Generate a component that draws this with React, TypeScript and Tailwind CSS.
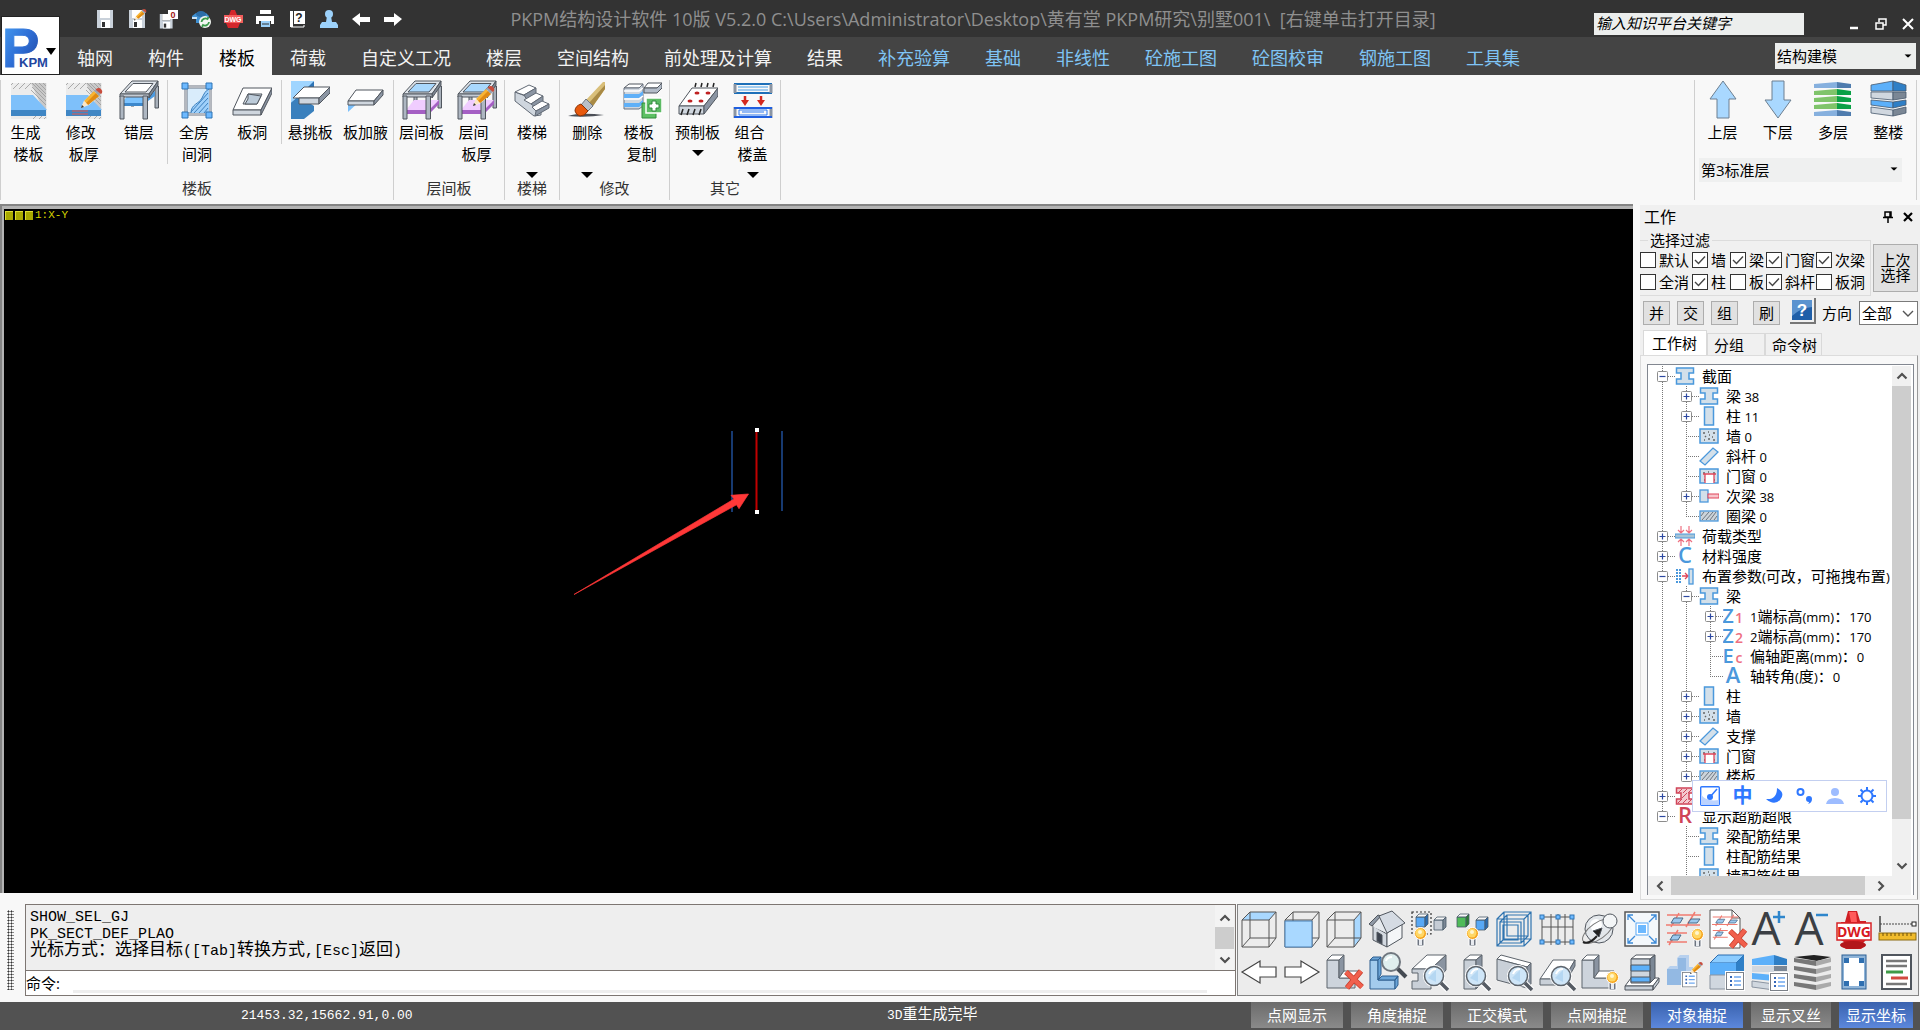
import { useState } from 'react';
import type { ReactNode } from 'react';

/* ---------- small shared pieces ---------- */

function Svg({ box, className, children }: { box: number; className: string; children: ReactNode }) {
  return (
    <svg viewBox={`0 0 ${box} ${box}`} className={`shrink-0 ${className}`} aria-hidden="true">
      {children}
    </svg>
  );
}

// Latin runs are set a little smaller than the Chinese text around them
function Mixed({ text, latin }: { text: string; latin: string }) {
  return (
    <>
      {text.split(/([\x20-\x7e]+)/).map((part, i) =>
        i % 2 ? (
          <span key={i} className={latin}>
            {part}
          </span>
        ) : (
          part
        ),
      )}
    </>
  );
}

function Caret({ className = '' }: { className?: string }) {
  return (
    <svg viewBox="0 0 12 6" className={`w-3 h-1.5 ${className}`} aria-hidden="true">
      <path d="M0 0h12L6 6z" fill="#000" />
    </svg>
  );
}

function Chevron({ d }: { d: string }) {
  return (
    <svg viewBox="0 0 12 12" className="w-3 h-3" aria-hidden="true">
      <path d={d} fill="none" stroke="#505050" strokeWidth="2.2" />
    </svg>
  );
}

const UP = 'M1.500 8.500L6 4l4.500 4.500';
const DOWN = 'M1.500 3.500L6 8l4.500-4.500';
const LEFT = 'M8.500 1.500L4 6l4.500 4.500';
const RIGHT = 'M3.500 1.500L8 6l-4.500 4.500';

/* ---------- drawing parts used by several icons ---------- */

const Pencil = () => (
  <g>
    <path d="M0 20l3-7L16 1l5 4L8 17z" fill="#fff" opacity=".7" />
    <path d="M3 13l10-10 5 5L7 17z" fill="#f8b432" />
    <path d="M5 15l10-10 3 3L7 17z" fill="#e08a12" />
    <path d="M13 3l2-2 5 4-2 3z" fill="#9aa3b0" />
    <path d="M15 1q3-2 5 0t1 4l-1 1-5-4z" fill="#c84c3c" />
    <path d="M0 20l3-7 4 4z" fill="#fbe6c4" />
    <path d="M0 20l1-3 2 2z" fill="#333" />
  </g>
);

const Bulb = () => (
  <g>
    <rect x="3" y="11" width="7" height="8" rx="1" fill="#6d7480" stroke="#fff" />
    <rect x="5" y="11" width="3" height="7" fill="#e8ebf0" />
    <circle cx="6.500" cy="6.500" r="6" fill="#f6a51f" stroke="#fff" />
    <circle cx="6" cy="6" r="4.500" fill="#ffd765" />
    <circle cx="6" cy="5" r="2" fill="#fff6cf" />
  </g>
);

const Lens = () => (
  <g>
    <path d="M17 17l8 8" stroke="#fff" strokeWidth="6" />
    <circle cx="11" cy="11" r="11" fill="#fff" />
    <path d="M18 18l7 7" stroke="#555b63" strokeWidth="3.500" />
    <circle cx="11" cy="11" r="9.500" fill="#cfe6f8" stroke="#5d646c" strokeWidth="1.500" />
    <path d="M5 13L13 5v12z" fill="#a9d0f0" opacity=".7" />
    <path d="M6 9q2-5 7-5" fill="none" stroke="#fff" strokeWidth="2" />
  </g>
);

const Cross = () => (
  <g>
    <path d="M2 3l16 15M17 2L3 19" stroke="#c63d2b" strokeWidth="5.500" />
    <path d="M2 3l16 15M17 2L3 19" stroke="#f0604d" strokeWidth="4" />
  </g>
);

const Sheet = () => (
  <g>
    <rect x="-1" y="-1" width="20" height="20" fill="#fff" />
    <rect x=".5" y=".5" width="17" height="17" fill="#fff" stroke="#7b8088" />
    <path d="M4 5h2M4 9h2M4 13h2" stroke="#3567b8" strokeWidth="2" />
    <path d="M8 5h7M8 9h7M8 13h7" stroke="#6fa8ef" strokeWidth="1.500" />
  </g>
);

const Table = ({ floor }: { floor: string }) => (
  <g strokeLinejoin="round">
    <rect x="36" y="6" width="3.500" height="22" fill="#a9b1bb" stroke="#50565e" />
    <rect x="12" y="6" width="3" height="20" fill="#a9b1bb" stroke="#50565e" />
    {floor === 'blue' ? (
      <g>
        <path d="M5 20l4-5h16v8H5z" fill="#7cc3ff" />
        <path d="M5 23h21v3H5z" fill="#3d88cc" />
        <path d="M29 16l7-5v5l-7 5z" fill="#4d9be0" />
      </g>
    ) : (
      <g>
        <path d="M4 30l8-10h25l-9 10z" fill="#f0cdff" />
        <path d="M4 30h23l10-10v4L27 34H4z" fill="#a560c4" />
      </g>
    )}
    <path d="M1 14L13 1h26l-9 13z" fill="#dfe4ea" stroke="#50565e" />
    <path d="M6 12l8-8.500h20L27 12z" fill={floor === 'blue' ? '#fff' : '#a9d8fd'} stroke="#50565e" />
    <path d="M30 14L39 1v4l-9 13z" fill="#7d8692" stroke="#50565e" />
    <path d="M1 14h29v3H1z" fill="#c5ccd5" stroke="#50565e" />
    <rect x="1" y="16" width="4" height="23" fill="#aeb7c2" stroke="#50565e" />
    <rect x="24" y="16" width="4.500" height="23" fill="#aeb7c2" stroke="#50565e" />
  </g>
);

const SlabWall = () => (
  <g>
    <path d="M2 3h36v36H2z" fill="#ececec" />
    <path d="M22 3h15v33z" fill="#c9c9c9" />
    <path d="M2 5l2-2M4 9l6-6M10 9l6-6M16 9l6-6M23 3l14 14M26 3l11 11M30 3l7 7M23 7l14 14M22 10l15 15M34 3l3 3M24 39l3-3M30 39l3-3M35 39l2-2" stroke="#999" strokeWidth=".8" />
    <path d="M2 15h22l14 15H2z" fill="#7ec0fa" />
    <path d="M2 30h35v6H2z" fill="#3f86c4" />
  </g>
);

const DwgMark = () => (
  <g>
    <path d="M12 0h9l3 10h6v19l-3 3 2 3-4 3H10l-5-3 3-4-3-2V11h4z" fill="#cf1f24" />
    <path d="M13 1h7l1 10h-6z" fill="#ff5b5b" />
    <ellipse cx="17" cy="34" rx="13" ry="4" fill="#b3161b" />
    <rect x="1" y="12" width="34" height="17" fill="#fff" stroke="#d62226" strokeWidth="1.500" />
    <text x="18" y="26" textAnchor="middle" fontSize="14" fontWeight="bold" fill="#d8191f" fontFamily="Open Sans">
      DWG
    </text>
  </g>
);

/* ---------- title bar ---------- */

const Disk = () => (
  <g>
    <path d="M1 0h3v8h10V0h3v18H1z" fill="#c9d1da" />
    <rect x="4" y="0" width="10" height="8" fill="#fff" />
    <rect x="5" y="10" width="9" height="8" fill="#fff" />
    <rect x="6" y="12" width="3" height="5" fill="#333" />
  </g>
);

const quickIcons: { name: string; art: ReactNode }[] = [
  { name: '保存', art: <Disk /> },
  {
    name: '另存',
    art: (
      <g>
        <Disk />
        <g transform="translate(6 -1) scale(.58)"><Pencil /></g>
      </g>
    ),
  },
  {
    name: '恢复',
    art: (
      <g>
        <g transform="translate(-1 4) scale(.8)"><Disk /></g>
        <rect x="8" y="0" width="10" height="9" fill="#fff" />
        <text x="13" y="8" textAnchor="middle" fontSize="9" fontWeight="bold" fill="#a01818" fontFamily="Liberation Sans">0</text>
      </g>
    ),
  },
  {
    name: '更新',
    art: (
      <g>
        <path d="M0 6l4-3h10l3 3v7H4V9H0z" fill="#3f8fd0" />
        <ellipse cx="9" cy="4" rx="5" ry="3" fill="#2c6ea8" />
        <path d="M0 7h5v2H0z" fill="#c9e4f9" />
        <circle cx="13" cy="12" r="6" fill="#f2f7f2" />
        <path d="M9.500 12a4 4 0 016-3l1-2M17 12a4 4 0 01-6 3l-1 2" fill="none" stroke="#3a9a4a" strokeWidth="1.800" />
      </g>
    ),
  },
  {
    name: 'DWG',
    art: (
      <g>
        <path d="M7 0h4l2 5h3v8l-2 5H4l-2-5V5h3z" fill="#d3262b" />
        <rect x="0" y="5" width="19" height="8" fill="#f25c5c" />
        <text x="9" y="12" textAnchor="middle" fontSize="7" fontWeight="bold" fill="#fff" fontFamily="Liberation Sans">DWG</text>
      </g>
    ),
  },
  {
    name: '打印',
    art: (
      <g>
        <path d="M4 0h11v4H4z" fill="#fff" />
        <path d="M0 6h18v8h-3v-3H3v3H0z" fill="#fff" />
        <path d="M5 11h9v6H5z" fill="#9dd2fb" />
        <path d="M6 14h7" stroke="#333" />
      </g>
    ),
  },
  {
    name: '帮助',
    art: (
      <g>
        <path d="M2 1h3v16H2zM6 1h11v13H6z" fill="#fff" />
        <path d="M3 17h13v-2" stroke="#fff" fill="none" />
        <text x="11" y="12" textAnchor="middle" fontSize="12" fontWeight="bold" fill="#222" fontFamily="Liberation Sans">?</text>
      </g>
    ),
  },
  {
    name: '用户',
    art: (
      <g fill="#9dd2fb">
        <circle cx="9" cy="4" r="4" />
        <path d="M7 6h4l1 6h4l2 3v3H0v-3l2-3h4z" />
      </g>
    ),
  },
  { name: '撤销', art: <path d="M0 9l8-6v4h10v5H8v4z" fill="#fff" /> },
  { name: '重做', art: <path d="M18 9l-8-6v4H0v5h10v4z" fill="#fff" /> },
];

function TitleBar() {
  return (
    <div className="h-[37px] bg-[#333] flex items-center pl-[90px]">
      <div className="flex gap-0.5">
        {quickIcons.map((q) => (
          <button key={q.name} aria-label={q.name} className="w-[30px] h-7 flex items-center justify-center">
            <Svg box={18} className="w-[18px] h-[18px] overflow-visible">{q.art}</Svg>
          </button>
        ))}
      </div>
      <h1 className="flex-1 pr-14 text-center text-[18px] leading-6 text-[#8f8f8f] whitespace-pre">
        {'PKPM结构设计软件 10版 V5.2.0 C:\\Users\\Administrator\\Desktop\\黄有堂 PKPM研究\\别墅001\\  [右键单击打开目录]'}
      </h1>
      <input
        type="text"
        aria-label="搜索"
        placeholder="输入知识平台关键字"
        className="w-[210px] h-[22px] mt-2.5 px-0.5 bg-[#eceeed] text-[15px] italic placeholder:text-black outline-none"
      />
      <div className="flex items-center ml-[38px] mt-2.5">
        <button aria-label="最小化" className="w-6 h-6 flex items-center justify-center">
          <Svg box={12} className="w-3 h-3"><path d="M2 10h8" stroke="#fff" strokeWidth="2.500" /></Svg>
        </button>
        <button aria-label="还原" className="w-[30px] h-6 flex items-center justify-center">
          <Svg box={12} className="w-3 h-3">
            <path d="M4 4V1h7v6H8" fill="none" stroke="#fff" strokeWidth="1.500" />
            <rect x="1" y="5" width="7" height="6" fill="none" stroke="#fff" strokeWidth="1.500" />
          </Svg>
        </button>
        <button aria-label="关闭" className="w-6 h-6 flex items-center justify-center">
          <Svg box={12} className="w-3 h-3"><path d="M1 1l10 10M11 1L1 11" stroke="#fff" strokeWidth="2" /></Svg>
        </button>
      </div>
    </div>
  );
}

function AppLogo() {
  return (
    <button aria-label="应用菜单" className="absolute left-px top-4 w-[59px] h-[59px] bg-white border border-[#222]">
      <svg viewBox="0 0 57 57" className="w-full h-full" aria-hidden="true">
        <defs>
          <linearGradient id="logo" x1="0" y1="0" x2="1" y2="1">
            <stop offset="0" stopColor="#4aa3f5" />
            <stop offset=".5" stopColor="#2f6fd6" />
            <stop offset="1" stopColor="#1c3b94" />
          </linearGradient>
        </defs>
        <text x="0" y="50" fontSize="56" fontWeight="bold" fill="url(#logo)" stroke="url(#logo)" fontFamily="Liberation Sans">P</text>
        <text x="17" y="50" fontSize="13" fontWeight="900" fill="#23469f" stroke="#fff" strokeWidth="2" paintOrder="stroke" fontFamily="Liberation Sans">KPM</text>
        <path d="M44 31h10l-5 7z" fill="#000" />
      </svg>
    </button>
  );
}

/* ---------- menu tabs ---------- */

const mainTabs = ['轴网', '构件', '楼板', '荷载', '自定义工况', '楼层', '空间结构', '前处理及计算', '结果'];
const extraTabs = ['补充验算', '基础', '非线性', '砼施工图', '砼图校审', '钢施工图', '工具集'];

function MenuTabs() {
  const [active, setActive] = useState('楼板');
  return (
    <nav className="h-[38px] bg-[#444] flex items-end pl-[60px]">
      <div className="flex gap-px h-[38px]">
        {[...mainTabs, ...extraTabs].map((tab) => (
          <button
            key={tab}
            onClick={() => setActive(tab)}
            className={`px-[17px] pt-[5px] text-[18px] leading-[33px] whitespace-nowrap ${
              active === tab ? 'bg-[#f8f8f8] text-black' : extraTabs.includes(tab) ? 'text-[#7fc4f5]' : 'text-[#f2f2f2]'
            }`}
          >
            {tab}
          </button>
        ))}
      </div>
      <div className="relative ml-auto mr-1 mb-1.5">
        <select aria-label="模块" className="appearance-none w-[141px] h-[26px] px-0.5 bg-[#eceeed] text-[15px]">
          <option>结构建模</option>
        </select>
        <Caret className="absolute right-0.5 top-2.5 scale-60 pointer-events-none" />
      </div>
    </nav>
  );
}

/* ---------- ribbon ---------- */

type Tool = { lines: string[]; art: ReactNode; menu?: boolean };

const penOnTop = <g transform="translate(16 6)"><Pencil /></g>;

const slabA: Tool[] = [
  { lines: ['生成', '楼板'], art: <SlabWall /> },
  {
    lines: ['修改', '板厚'],
    art: (
      <g>
        <SlabWall />
        <path d="M8 31h16M8 34h16" stroke="#e8564a" strokeWidth="1.200" />
        <g transform="translate(17 8)"><Pencil /></g>
      </g>
    ),
  },
  { lines: ['错层'], art: <Table floor="blue" /> },
];

const slabB: Tool[] = [
  {
    lines: ['全房', '间洞'],
    art: (
      <g>
        <rect x="8" y="6" width="26" height="29" fill="#fff" stroke="#6a7380" />
        <rect x="10" y="8" width="22" height="25" fill="#d9ecfb" stroke="#6a7380" />
        <path d="M14 33c0-9 8-9 11-15 2-4 3-7 7-9v24z" fill="#9fd0fa" />
        <path d="M14 32L31 13M17 33l14-15M22 33l9-10M27 33l4-5" stroke="#3c80be" />
        <path d="M14 33c0-9 8-9 11-15 2-4 3-7 7-9" fill="none" stroke="#3c80be" />
        {['M5 3h6v6H5z', 'M29 3h6v6h-6z', 'M5 32h6v6H5z', 'M29 32h6v6h-6z'].map((d) => (
          <path key={d} d={d} fill="#6db9ff" stroke="#2f74b5" />
        ))}
      </g>
    ),
  },
  {
    lines: ['板洞'],
    art: (
      <g stroke="#50565e" strokeLinejoin="round">
        <path d="M11 8h29L29 30H1z" fill="#fff" />
        <path d="M1 30h28v5H1z" fill="#cfd6de" />
        <path d="M40 8v5L29 35v-5z" fill="#8b95a3" />
        <path d="M16 14h14l-5 10H11z" fill="#dfe8f0" />
        <path d="M16 14v5l-3 5h12l4-8z" fill="#bccbd9" />
      </g>
    ),
  },
];

const slabC: Tool[] = [
  {
    lines: ['悬挑板'],
    art: (
      <g>
        <path d="M1 16L24 1v14L1 39z" fill="#2f74b5" />
        <path d="M1 1h23L8 17l-7 6z" fill="#9fd5ff" />
        <path d="M1 23l8-7 15 10v5L14 39H1z" fill="#3a80bd" />
        <path d="M14 7h26L29 18H3z" fill="#fff" stroke="#50565e" />
        <path d="M9 18h20v6H9z" fill="#cfd6de" stroke="#50565e" />
        <path d="M40 7v6L29 24v-6z" fill="#8b95a3" stroke="#50565e" />
      </g>
    ),
  },
  {
    lines: ['板加腋'],
    art: (
      <g>
        <path d="M3 21h12L3 32z" fill="#7cc0fb" />
        <path d="M11 10h27l-9 11H3z" fill="#fff" stroke="#50565e" />
        <path d="M3 21h26v4H3z" fill="#cfd6de" stroke="#50565e" />
        <path d="M38 10v5l-9 10v-4z" fill="#8b95a3" stroke="#50565e" />
      </g>
    ),
  },
];

const midSlab: Tool[] = [
  { lines: ['层间板'], art: <Table floor="purple" /> },
  { lines: ['层间', '板厚'], art: <g><Table floor="purple" />{penOnTop}</g> },
];

const stairs: Tool[] = [
  {
    lines: ['楼梯'],
    menu: true,
    art: (
      <g stroke="#626a75" strokeLinejoin="round">
        <path d="M3 12v9l19 15 7-1V22z" fill="#cfd6de" />
        <path d="M3 12l14-7 7 3-12 7z" fill="#fff" />
        <path d="M12 15l12-7v5l-9 7z" fill="#8b95a3" />
        <path d="M12 20l12-7 7 3-12 8z" fill="#fff" />
        <path d="M19 24l12-8v5l-8 6z" fill="#8b95a3" />
        <path d="M20 27l10-6 7 3-13 7z" fill="#fff" />
        <path d="M24 31l13-7v4L23 36z" fill="#8b95a3" />
      </g>
    ),
  },
];

const editTools: Tool[] = [
  {
    lines: ['删除'],
    menu: true,
    art: (
      <g>
        <path d="M1 36q12-4 36-1-18 3-36 1z" fill="#4b4f56" />
        <path d="M19 20L36 2h2v7L26 26z" fill="#d9bf7a" />
        <path d="M22 23L38 5v4L26 26z" fill="#a98a45" />
        <path d="M14 25l5-6 7 7-5 5z" fill="#b9bfc7" stroke="#70767f" />
        <path d="M8 31q0-5 6-7l7 7q-3 5-8 5-4-1-5-5z" fill="#e8590c" stroke="#8b3204" />
      </g>
    ),
  },
  {
    lines: ['楼板', '复制'],
    art: (
      <g>
        <path d="M7 4h14l-4 4H2z" fill="#fff" stroke="#50565e" />
        <path d="M2 8h15l4-4v22l-4 3H2z" fill="#cfd6de" stroke="#6a7380" />
        <path d="M2 14h15l4-3v4l-4 3H2zM2 23h15l4-3v4l-4 3H2z" fill="#5fb0f8" />
        <path d="M2 11h15l4-3M2 19h15l4-3" fill="none" stroke="#fff" strokeWidth="1.500" />
        <path d="M26 3h14l-5 5H22z" fill="#fff" stroke="#50565e" />
        <path d="M22 8h13l5-5v5l-5 5H22z" fill="#b3bcc8" stroke="#50565e" />
        <path d="M20 23h14v15H20z" fill="#5cc063" stroke="#2f8a3a" />
        <path d="M24 18h16v15H24z" fill="#5dbb65" stroke="#fff" strokeWidth="1.500" />
        <path d="M30 21h4v3h3v4h-3v3h-4v-3h-3v-4h3z" fill="#fff" stroke="#2f8a3a" />
      </g>
    ),
  },
];

const otherTools: Tool[] = [
  {
    lines: ['预制板'],
    menu: true,
    art: (
      <g>
        <path d="M14 8h26L26 26H1z" fill="#fff" stroke="#50565e" />
        <path d="M1 26h25v8H1z" fill="#cfd6de" stroke="#50565e" />
        <path d="M40 8v8L26 34v-8z" fill="#8b95a3" stroke="#50565e" />
        <path d="M17 7l1-4M23 7l1-4M29 7l1-4M35 7l1-4M5 29l-2 6M11 29l-2 6M17 29l-2 6M23 29l-2 6" stroke="#222" strokeWidth="1.500" />
        <g fill="#c02121">
          <ellipse cx="19" cy="13" rx="2.500" ry="1.500" /><ellipse cx="30" cy="13" rx="2.500" ry="1.500" />
          <ellipse cx="12" cy="21" rx="2.500" ry="1.500" /><ellipse cx="23" cy="21" rx="2.500" ry="1.500" />
        </g>
      </g>
    ),
  },
  {
    lines: ['组合', '楼盖'],
    menu: true,
    art: (
      <g>
        <path d="M1 4h38M1 13h38" stroke="#1d6fb8" strokeWidth="2" />
        <path d="M5 7h30M5 10h30" stroke="#4aa0e6" />
        <path d="M2 4v9M38 4v9M2 27v11M38 27v11" stroke="#8b95a3" strokeWidth="3" />
        <path d="M12 16v6M28 16v6" stroke="#d4291f" strokeWidth="2.500" />
        <path d="M8 20h8l-4 6zM24 20h8l-4 6z" fill="#d4291f" />
        <path d="M1 28h38M1 37h38" stroke="#1f5fe0" strokeWidth="2" />
        <path d="M6 30v5h28v-5zM9 32h22" fill="none" stroke="#2f7af0" />
      </g>
    ),
  },
];

function ToolButton({ tool }: { tool: Tool }) {
  const two = tool.lines.length === 2;
  return (
    <button className="flex-1 flex flex-col items-center h-[102px] whitespace-nowrap">
      <Svg box={40} className="w-10 h-10">{tool.art}</Svg>
      <span className={`mt-0.5 text-[15px] leading-[21px] ${two ? 'pr-1.5' : ''}`}>{tool.lines[0]}</span>
      {two && <span className="text-[15px] leading-[22px]">{tool.lines[1]}</span>}
      {tool.menu && <Caret className={tool.lines[0] !== '预制板' ? 'mt-auto mb-1' : 'mt-[7px]'} />}
    </button>
  );
}

function RibbonGroup({ title, width, children }: { title: string; width: string; children: ReactNode }) {
  return (
    <section className={`${width} shrink-0 flex flex-col border-r border-[#cfcfcf]`}>
      <div className="flex">{children}</div>
      <h2 className="text-center text-[15px] leading-5 text-[#333] -mt-1">{title}</h2>
    </section>
  );
}

function Tools({ items }: { items: Tool[] }) {
  return items.map((t) => <ToolButton key={t.lines.join('')} tool={t} />);
}

const prism = (y: number, left: string, right: string) => (
  <g key={y}>
    <path d={`M1 ${y + 1}L24 ${y - 1}v6L1 ${y + 5}z`} fill={left} />
    <path d={`M24 ${y - 1}L38 ${y + 1}v4L24 ${y + 5}z`} fill={right} />
  </g>
);

const floorTools: Tool[] = [
  { lines: ['上层'], art: <path d="M20 1l13 18h-7v19H14V19H7z" fill="#a9d8ff" stroke="#6d7f90" /> },
  { lines: ['下层'], art: <path d="M20 38l13-18h-7V1H14v19H7z" fill="#a9d8ff" stroke="#6d7f90" /> },
  {
    lines: ['多层'],
    art: (
      <g>
        {prism(3, '#86b0de', '#4f7cae')}
        {prism(10, '#7fc46a', '#0aa046')}
        {prism(17, '#7fc46a', '#0aa046')}
        {prism(24, '#7fc46a', '#0aa046')}
        {prism(31, '#86b0de', '#4f7cae')}
      </g>
    ),
  },
  {
    lines: ['整楼'],
    art: (
      <g stroke="#46586c" strokeWidth=".8">
        <path d="M3 5l22-4v10H3z" fill="#5cb0fa" /><path d="M25 1l13 4v6H25z" fill="#2f7fc6" />
        <path d="M3 12h22v8L3 18z" fill="#d0d7df" /><path d="M25 12h13v6l-13 2z" fill="#7b8795" />
        <path d="M3 20l22 2v6L3 25z" fill="#5cb0fa" /><path d="M25 22l13-2v5l-13 3z" fill="#2f7fc6" />
        <path d="M3 27l22 3v6L3 33z" fill="#d0d7df" /><path d="M25 30l13-3v6l-13 3z" fill="#7b8795" />
      </g>
    ),
  },
];

function Ribbon() {
  return (
    <div className="h-[129px] bg-[#f8f8f8] flex pt-[5px] pb-1">
      <RibbonGroup title="楼板" width="w-[394px] border-l">
        <div className="flex flex-3"><Tools items={slabA} /></div>
        <div className="w-px h-[84px] mx-px bg-[#cfcfcf]" />
        <div className="flex flex-2"><Tools items={slabB} /></div>
        <div className="w-px h-16 mx-px bg-[#cfcfcf]" />
        <div className="flex flex-2"><Tools items={slabC} /></div>
      </RibbonGroup>
      <RibbonGroup title="层间板" width="w-[111px]"><Tools items={midSlab} /></RibbonGroup>
      <RibbonGroup title="楼梯" width="w-[55px]"><Tools items={stairs} /></RibbonGroup>
      <RibbonGroup title="修改" width="w-[110px]"><Tools items={editTools} /></RibbonGroup>
      <RibbonGroup title="其它" width="w-[111px]"><Tools items={otherTools} /></RibbonGroup>
      <section className="ml-auto mr-[3px] w-[223px] border-x border-[#cfcfcf]">
        <div className="flex h-[78px] overflow-hidden"><Tools items={floorTools} /></div>
        <div className="relative ml-1 w-[203px]">
          <select aria-label="标准层" className="appearance-none w-full h-6 px-0.5 bg-[#eff0f0] text-[15px]">
            <option>第3标准层</option>
          </select>
          <Caret className="absolute right-0.5 top-2 scale-60 pointer-events-none" />
        </div>
      </section>
    </div>
  );
}

/* ---------- drawing view ---------- */

function Viewport() {
  return (
    <div className="flex-1 min-w-0 flex flex-col border-t-2 border-l-2 border-[#848484] mb-[7px]">
      <div className="flex-1 border-t-3 border-l-2 border-[#b3b3b3] bg-black relative overflow-hidden">
        <div className="flex items-center gap-0.5 px-px h-3">
          {[0, 1, 2].map((i) => (
            <span key={i} className="w-2 h-[9px] bg-[#a8a800] border-t border-l border-[#dede30]" />
          ))}
          <span className="text-[11px] leading-3 text-[#d8d800] font-['Liberation_Mono',monospace]">1:X-Y</span>
        </div>
        <svg className="absolute inset-0 w-full h-full" aria-hidden="true">
          <path d="M728 222v81M778 222v80" stroke="#1f4e96" strokeWidth="1.500" />
          <path d="M752.500 221v82" stroke="#c00000" strokeWidth="2" />
          <rect x="751" y="219" width="4" height="4" fill="#fff" />
          <rect x="751" y="301" width="4" height="4" fill="#fff" />
          <path d="M744.500 285L727 286.300 730 290 570 385.500 732.500 295.800 735 299.700z" fill="#ff3838" stroke="#ff3838" strokeWidth=".7" />
        </svg>
      </div>
    </div>
  );
}

/* ---------- work panel ---------- */

const filters: [string, boolean][][] = [
  [['默认', false], ['墙', true], ['梁', true], ['门窗', true], ['次梁', true]],
  [['全消', false], ['柱', true], ['板', false], ['斜杆', true], ['板洞', false]],
];

const filterWidths = ['w-[52px]', 'w-[38px]', 'w-9', 'w-[50px]', 'w-[54px]'];

function FilterBox({ label, initial, width }: { label: string; initial: boolean; width: string }) {
  const [on, setOn] = useState(initial);
  return (
    <label className={`relative flex items-center gap-[3px] text-[15px] leading-[22px] whitespace-nowrap ${width}`}>
      <input
        type="checkbox"
        checked={on}
        onChange={() => setOn(!on)}
        className="peer appearance-none w-4 h-4 shrink-0 border border-[#333] bg-white"
      />
      <svg viewBox="0 0 16 16" className="absolute left-0 w-4 h-4 hidden peer-checked:block pointer-events-none">
        <path d="M3 8l3.500 3.500L13 4.500" fill="none" stroke="#444" strokeWidth="1.400" />
      </svg>
      {label}
    </label>
  );
}

const Beam = () => <path d="M1.500 2h17v5H14v6h4.500v5h-17v-5H6V7H1.500z" fill="#d3e0ea" stroke="#4a98dc" strokeWidth="1.500" />;
const Column = () => <rect x="5.500" y="1" width="9" height="18" fill="#d3e0ea" stroke="#4a98dc" strokeWidth="1.500" />;
const Wall = () => (
  <g>
    <rect x="1" y="3" width="18" height="14" fill="#d3e0ea" stroke="#4a98dc" strokeWidth="1.500" />
    <path d="M4 7h2M9 6h1M14 7h2M6 11l1-1M5 14h1M10 9h1M9 13h2M13 11h1M14 14h2" stroke="#666" strokeWidth="1.500" />
  </g>
);
const Door = () => (
  <g>
    <Wall />
    <path d="M6 17V8h9v9z" fill="#fff" />
    <path d="M4 8h13M6 17V8h9v9" fill="none" stroke="#e0455a" strokeWidth="1.300" />
  </g>
);
const Brace = () => <path d="M1 15L14 2l5 4L6 19z" fill="#d3e0ea" stroke="#4a98dc" strokeWidth="1.300" />;
const Ring = () => (
  <g>
    <rect x="1" y="5" width="18" height="10" fill="#ccd4da" stroke="#4a98dc" strokeWidth="1.300" />
    <path d="M3 14l7-8M7 14l7-8M11 14l6-8M15 14l3-4M2 10l3-4" stroke="#6d767f" />
  </g>
);

function Letter({ main, sub, color = '#4a98dc' }: { main: string; sub?: string; color?: string }) {
  return (
    <g fontFamily="Open Sans" fontWeight="600">
      <text x={sub ? 5 : 10} y="17" textAnchor="middle" fontSize={sub ? 20 : 22} fill={color}>{main}</text>
      {sub && <text x="16" y="17" textAnchor="middle" fontSize="14" fill="#ee6f80">{sub}</text>}
    </g>
  );
}

// guides: "|" continues the ancestor line, " " leaves the column empty
type TreeRow = { guides: string; box?: '+' | '-'; last?: boolean; art: ReactNode; text: string };

const treeRows: TreeRow[] = [
  { guides: '', box: '-', art: <Beam />, text: '截面' },
  { guides: '|', box: '+', art: <Beam />, text: '梁 38' },
  { guides: '|', box: '+', art: <Column />, text: '柱 11' },
  { guides: '|', art: <Wall />, text: '墙 0' },
  { guides: '|', art: <Brace />, text: '斜杆 0' },
  { guides: '|', art: <Door />, text: '门窗 0' },
  {
    guides: '|',
    box: '+',
    art: (
      <g>
        <rect x="1" y="4" width="8" height="12" fill="#d3e0ea" stroke="#4a98dc" strokeWidth="1.300" />
        <rect x="9" y="8" width="11" height="4" fill="#f7c5cb" stroke="#e0455a" />
      </g>
    ),
    text: '次梁 38',
  },
  { guides: '|', last: true, art: <Ring />, text: '圈梁 0' },
  {
    guides: '',
    box: '+',
    art: (
      <g>
        <path d="M0 8h20v4H0z" fill="#a8c4d6" stroke="#4a98dc" />
        <path d="M6 0v6M14 0v6M6 20v-6M14 20v-6M3 4l3 3 3-3M11 4l3 3 3-3M3 16l3-3 3 3M11 16l3-3 3 3" fill="none" stroke="#ee6f80" strokeWidth="1.200" />
      </g>
    ),
    text: '荷载类型',
  },
  { guides: '', box: '+', art: <Letter main="C" />, text: '材料强度' },
  {
    guides: '',
    box: '-',
    art: (
      <g>
        <path d="M2 3v15M5 3v15" stroke="#4a98dc" strokeWidth="2" strokeDasharray="2 1" />
        <path d="M7 10h5M10 7l3 3-3 3" fill="none" stroke="#e0455a" strokeWidth="1.300" />
        <rect x="14" y="3" width="4" height="15" fill="#d3e0ea" stroke="#4a98dc" strokeWidth="1.300" />
      </g>
    ),
    text: '布置参数(可改，可拖拽布置)',
  },
  { guides: '|', box: '-', art: <Beam />, text: '梁' },
  { guides: '||', box: '+', art: <Letter main="Z" sub="1" />, text: '1端标高(mm)：170' },
  { guides: '||', box: '+', art: <Letter main="Z" sub="2" />, text: '2端标高(mm)：170' },
  { guides: '||', art: <Letter main="E" sub="c" />, text: '偏轴距离(mm)：0' },
  { guides: '||', last: true, art: <Letter main="A" />, text: '轴转角(度)：0' },
  { guides: '|', box: '+', art: <Column />, text: '柱' },
  { guides: '|', box: '+', art: <Wall />, text: '墙' },
  { guides: '|', box: '+', art: <Brace />, text: '支撑' },
  { guides: '|', box: '+', art: <Door />, text: '门窗' },
  { guides: '|', box: '+', last: true, art: <Ring />, text: '楼板' },
  {
    guides: '',
    box: '+',
    art: (
      <g>
        <path d="M1.500 2h17v5H14v6h4.500v5h-17v-5H6V7H1.500z" fill="#f3c9ce" stroke="#cf4458" strokeWidth="1.500" />
        <path d="M3 7l4-4M8 7l4-4M13 7l4-4M7 12l5-5M3 17l4-4M8 17l4-4M13 17l4-4" stroke="#cf4458" />
      </g>
    ),
    text: '',
  },
  { guides: '', box: '-', last: true, art: <Letter main="R" color="#cf4458" />, text: '显示超筋超限' },
  { guides: ' ', art: <Beam />, text: '梁配筋结果' },
  { guides: ' ', art: <Column />, text: '柱配筋结果' },
  { guides: ' ', art: <Wall />, text: '墙配筋结果' },
];

function TreeLine({ row }: { row: TreeRow }) {
  return (
    <li className="flex items-center h-5 whitespace-nowrap">
      {row.guides.split('').map((g, i) => (
        <svg key={i} viewBox="0 0 24 20" className="w-6 h-5 shrink-0" aria-hidden="true">
          {g === '|' && <path d="M11.500 0v20" stroke="#777" strokeDasharray="1 1" />}
        </svg>
      ))}
      <svg viewBox="0 0 24 20" className="w-6 h-5 shrink-0" aria-hidden="true">
        <path d={row.last ? 'M11.500 0v10' : 'M11.500 0v20'} stroke="#777" strokeDasharray="1 1" />
        <path d="M11 10.500h13" stroke="#777" strokeDasharray="1 1" />
        {row.box && (
          <g>
            <rect x="6.500" y="5.500" width="10" height="10" rx="1" fill="#fff" stroke="#8c8c8c" />
            <path d={row.box === '+' ? 'M8.500 10.500h6M11.500 7.500v6' : 'M8.500 10.500h6'} stroke="#2c48a0" strokeWidth="1.200" />
          </g>
        )}
      </svg>
      <Svg box={20} className="w-5 h-5">{row.art}</Svg>
      <span className="ml-[7px] text-[15px] leading-5">
        <Mixed text={row.text} latin="text-[13px]" />
      </span>
    </li>
  );
}

function ImeBar() {
  return (
    <div className="absolute left-[51px] bottom-[87px] w-[195px] h-8 bg-white border border-[#c3cff0] flex items-center justify-between px-[7px] text-[#2f78ff]">
      <Svg box={20} className="w-5 h-5">
        <rect x=".7" y=".7" width="18.600" height="18.600" rx="1" fill="#fff" stroke="#2f78ff" strokeWidth="1.400" />
        <path d="M1 8q4 8 18 6v5H1z" fill="#bcd3ff" />
        <circle cx="10" cy="11" r="3" fill="#2f78ff" />
        <path d="M10 11l7-8" stroke="#2f78ff" strokeWidth="1.500" />
      </Svg>
      <span className="text-[20px] leading-5 font-bold">中</span>
      <Svg box={18} className="w-[18px] h-[18px]"><path d="M12 1q9 5 3 12-6 6-14-1 11 1 11-11z" fill="#2f78ff" /></Svg>
      <Svg box={18} className="w-[18px] h-[18px]">
        <circle cx="4.500" cy="5" r="3" fill="none" stroke="#2f78ff" strokeWidth="2" />
        <path d="M10 12a3 3 0 116 0q0 4-4 5 1-1 1-2-3 0-3-3z" fill="#2f78ff" />
      </Svg>
      <Svg box={18} className="w-[18px] h-[18px]"><g fill="#9dbcff"><circle cx="9" cy="5" r="4" /><path d="M0 17q1-6 9-6t9 6z" /></g></Svg>
      <Svg box={20} className="w-5 h-5 mr-0.5">
        <g stroke="#2f78ff" strokeWidth="2" fill="none">
          <circle cx="10" cy="10" r="5.500" />
          <path d="M10 4V1M10 19v-3M4 10H1M19 10h-3M6 6L3.500 3.500M16.500 16.500L14 14M14 6l2.500-2.500M3.500 16.500L6 14" />
        </g>
      </Svg>
    </div>
  );
}

const squareButton = 'w-[27px] h-6 bg-[#e1e1e1] border border-[#adadad] text-[15px] leading-5';

function WorkPanel() {
  const [tab, setTab] = useState('工作树');
  return (
    <aside className="w-[280px] ml-[7px] shrink-0 bg-[#f0f0f0] flex flex-col min-h-0 pr-0.5 mt-px">
      <header className="h-[26px] flex items-center pl-1 pb-0.5">
        <h2 className="text-[16px] leading-6">工作</h2>
        <button aria-label="固定" className="ml-auto w-5 h-5 flex items-center justify-center">
          <Svg box={12} className="w-3 h-3"><path d="M3 1h6v5H3zM8 1v5M1 6.500h10M6 7v5" fill="none" stroke="#000" strokeWidth="1.500" /></Svg>
        </button>
        <button aria-label="关闭面板" className="w-5 h-5 flex items-center justify-center">
          <Svg box={12} className="w-3 h-3"><path d="M2 2l8 8M10 2l-8 8" stroke="#000" strokeWidth="2.200" /></Svg>
        </button>
      </header>
      <div className="flex items-end gap-0.5">
        <fieldset className="flex-1 min-w-0 border-t border-r border-b border-[#dcdcdc] pb-0.5">
          <legend className="ml-2 px-0.5 text-[15px] leading-[18px]">选择过滤</legend>
          {filters.map((line, r) => (
            <div key={r} className="flex">
              {line.map(([label, on], i) => (
                <FilterBox key={label} label={label} initial={on} width={filterWidths[i]} />
              ))}
            </div>
          ))}
        </fieldset>
        <button className="w-[45px] h-12 mb-1 bg-[#e1e1e1] border border-[#adadad] text-[15px] leading-[15px]">上次选择</button>
      </div>
      <div className="flex items-center pl-[3px] mt-[3px] h-7 text-[15px]">
        <button className={squareButton}>并</button>
        <button className={`${squareButton} ml-[7px]`}>交</button>
        <button className={`${squareButton} ml-[7px]`}>组</button>
        <button className={`${squareButton} ml-[15px]`}>刷</button>
        <button aria-label="帮助" className="w-[26px] h-[26px] ml-2.5 mb-1 border-r-2 border-b-2 border-[#777] bg-[#f0f0f0] flex items-center justify-center">
          <Svg box={20} className="w-5 h-5">
            <rect width="20" height="20" fill="#1f5fa8" />
            <path d="M0 0h20v7Q8 8 0 16z" fill="#5b93cf" />
            <text x="10" y="16" textAnchor="middle" fontSize="17" fontWeight="bold" fill="#fff" fontFamily="Liberation Sans">?</text>
          </Svg>
        </button>
        <label htmlFor="direction" className="ml-1.5">方向</label>
        <div className="relative ml-[7px] flex-1">
          <select id="direction" className="appearance-none w-full h-6 px-0.5 bg-white border border-[#7a7a7a] text-[15px]">
            <option>全部</option>
          </select>
          <svg viewBox="0 0 12 12" className="absolute right-1 top-1.5 w-3 h-3 pointer-events-none"><path d="M1 4l5 5 5-5" fill="none" stroke="#555" strokeWidth="1.400" /></svg>
        </div>
      </div>
      <div className="flex items-end mt-[3px] pl-[3px] h-[25px] text-[15px]">
        {[['工作树', 'w-16'], ['分组', 'w-[58px]'], ['命令树', 'w-[57px]']].map(([name, width]) => (
          <button
            key={name}
            onClick={() => setTab(name)}
            className={`${width} text-left whitespace-nowrap border border-b-0 border-[#d9d9d9] ${
              name === tab ? 'h-[25px] bg-white pl-2' : 'h-[22px] leading-[22px] pl-1.5'
            }`}
          >
            {name}
          </button>
        ))}
      </div>
      <div className="relative flex-1 min-h-0 flex flex-col border border-[#dcdcdc] border-r-[#999] bg-[#f8f8f8] pt-2 pl-1.5 pr-[3px] pb-1">
        <div className="flex-1 min-h-0 flex flex-col bg-white border border-[#828790] border-b-0 pr-0.5 pt-px">
          <div className="flex-1 min-h-0 flex">
            <ul className="flex-1 min-w-0 h-full overflow-hidden pl-[3px]">
              {treeRows.map((row, i) => <TreeLine key={i} row={row} />)}
            </ul>
            <div className="w-[19px] shrink-0 bg-[#f0f0f0] flex flex-col items-center">
              <div className="h-5 flex items-center"><Chevron d={UP} /></div>
              <div className="w-full flex-1 bg-[#cdcdcd]" />
              <div className="h-[57px] flex items-end pb-1"><Chevron d={DOWN} /></div>
            </div>
          </div>
          <div className="h-[19px] shrink-0 bg-[#f0f0f0] flex items-center pl-1.5 pr-6">
            <div className="w-[17px]"><Chevron d={LEFT} /></div>
            <div className="flex-1 h-full bg-[#cdcdcd]" />
            <div className="pl-2.5"><Chevron d={RIGHT} /></div>
          </div>
        </div>
        <ImeBar />
      </div>
    </aside>
  );
}

/* ---------- command line and view tools ---------- */

const logLines = ['SHOW_SEL_GJ', 'PK_SECT_DEF_PLAO', '光标方式：选择目标([Tab]转换方式,[Esc]返回)'];
const mono = "font-['Liberation_Mono','Noto_Sans_CJK_SC',monospace]";

function CommandLine() {
  return (
    <div className="flex-1 min-w-0 flex pl-[7px]">
      <div className="w-[7px] my-1.5 mr-[11px] bg-[radial-gradient(#333_45%,transparent_50%)] bg-size-[3px_3px]" />
      <div className="flex-1 min-w-0 flex flex-col border border-[#7d7672]">
        <div className="flex-1 min-h-0 flex bg-[#eee] border-b border-[#7d7672]">
          <div className={`flex-1 pl-1 pt-0.5 text-[17px] text-black ${mono}`}>
            {logLines.map((line) => (
              <p key={line} className="h-[17px] leading-[20px]">
                <Mixed text={line} latin="text-[15px]" />
              </p>
            ))}
          </div>
          <div className="w-[19px] mr-px bg-[#f3f3f3] flex flex-col items-center">
            <div className="h-[22px] flex items-center pt-1"><Chevron d={UP} /></div>
            <div className="w-full h-[22px] bg-[#cdcdcd]" />
            <div className="flex-1 flex items-center"><Chevron d={DOWN} /></div>
          </div>
        </div>
        <div className="h-6 bg-white flex items-center">
          <label htmlFor="command" className="text-[15px] leading-5 w-[47px]">命令:</label>
          <input id="command" type="text" className="flex-1 h-5 mr-7 bg-white border-b-3 border-[#eee] outline-none" />
        </div>
      </div>
    </div>
  );
}

const wire = 'M1 9h27v27H1zM9 1h26v26H9zM1 9l8-8M28 9l7-8M28 36l7-9M1 36l8-9';

const ell = (
  <g stroke="#5d646c" strokeLinejoin="round">
    <path d="M1 6h12v18h16v10H1z" fill="#cdd4dc" />
    <path d="M1 6l5-5h12l-5 5z" fill="#fff" />
    <path d="M13 6l5-5v16l-5 7z" fill="#8a94a1" />
    <path d="M13 24l5-7h15l-4 7z" fill="#fff" />
  </g>
);

const miniCube = (x: number, y: number, front: string, side: string) => (
  <g key={x} stroke="#4a5a6a" strokeWidth=".8">
    <path d={`M${x} ${y + 3}h9v10h-9z`} fill={front} />
    <path d={`M${x} ${y + 3}l3-3h9l-3 3z`} fill="#fff" fillOpacity=".6" />
    <path d={`M${x + 9} ${y + 3}l3-3v10l-3 3z`} fill={side} />
  </g>
);

const planLines = (
  <g>
    <path d="M1 4h34M0 14h34M1 22h20M1 31h20M5 16l8-14M20 16l9-15M3 34l9-15" stroke="#f07b70" strokeWidth="1.500" />
    <path d="M8 7h9l-3 5H5zM25 8h9l-3 4h-9zM7 24h8l-3 5H4z" fill="#9cc8ee" stroke="#4a6a88" />
  </g>
);

const bigA = (
  <text x="15" y="34" textAnchor="middle" fontSize="46" fill="#3b3f44" fontFamily="Open Sans">A</text>
);

const viewTools: { name: string; art: ReactNode }[] = [
  { name: '俯视', art: <g><path d="M1 9l8-8h26l-7 8z" fill="#a9d8ff" /><path d={wire} fill="none" stroke="#555" /></g> },
  { name: '前视', art: <g><path d={wire} fill="none" stroke="#555" /><path d="M1 10h27v26H1z" fill="#a9d8ff" stroke="#4a80b5" /></g> },
  { name: '侧视', art: <g><path d="M28 9l7-8v26l-7 9z" fill="#a9d8ff" /><path d={wire} fill="none" stroke="#555" /></g> },
  {
    name: '轴测',
    art: (
      <g stroke="#50565e" strokeLinejoin="round">
        <path d="M4 15l14 8v13L4 29z" fill="#d3d9e0" />
        <path d="M18 22l15-9v14l-15 9z" fill="#f4f6f8" />
        <path d="M8 21l5 3v9l-5-3z" fill="#3d4450" />
        <path d="M4 16L10 7l8 15z" fill="#e6eaee" stroke="none" />
        <path d="M0 13L9 4l3 1-9 10z" fill="#8f99a6" />
        <path d="M10 5L23 0l13 12-18 10z" fill="#d5dbe3" />
      </g>
    ),
  },
  {
    name: '单独显示',
    art: (
      <g>
        <path d="M1 1h19v22H1z" fill="none" stroke="#333" strokeWidth="1.200" strokeDasharray="2 2" />
        {miniCube(5, 3, '#58a8f5', '#2b6cb0')}
        {miniCube(23, 6, '#c5ccd5', '#7b8795')}
        <g transform="translate(3 16)"><Bulb /></g>
      </g>
    ),
  },
  {
    name: '全部显示',
    art: (
      <g>
        {miniCube(3, 3, '#4fbb58', '#2a7d32')}
        {miniCube(22, 6, '#58a8f5', '#2b6cb0')}
        <g transform="translate(12 16)"><Bulb /></g>
      </g>
    ),
  },
  {
    name: '线框',
    art: <path d="M1 8h27v27H1zM4 11h21v21H4zM7 14h15v15H7zM8 1h27v27H8zM11 4h21v21H11zM1 8l7-7M28 8l7-7M28 35l7-7M4 11l7-7M1 35l7-7M25 32l7-7" fill="none" stroke="#2f74b0" strokeWidth="1.200" />,
  },
  {
    name: '轴网',
    art: (
      <g>
        <path d="M3 6h31M3 16h31M3 31h31M3 6v25M12 3v31M19 3v31M26 3v31M34 6v25" stroke="#555" />
        {[3, 19, 33].map((x) => [6, 31].map((y) => <rect key={`${x}-${y}`} x={x - 2} y={y - 2} width="4" height="4" fill="#6db9ff" stroke="#2f74b5" />))}
      </g>
    ),
  },
  {
    name: '旋转',
    art: (
      <g stroke="#50565e">
        <circle cx="18" cy="18" r="14" fill="#e3e7eb" />
        <circle cx="15" cy="14" r="6" fill="#fff" stroke="none" />
        <ellipse cx="17" cy="20" rx="18" ry="8" transform="rotate(-35 17 20)" fill="none" stroke="#777" />
        <circle cx="29" cy="10" r="7" fill="#f3f5f6" />
        <path d="M2 31q6 3 14-6" fill="none" stroke="#222" strokeWidth="2" />
        <path d="M12 20l9-3-3 9z" fill="#222" />
      </g>
    ),
  },
  {
    name: '充满',
    art: (
      <g>
        <rect x="1" y="1" width="34" height="34" fill="#f4f8fb" stroke="#555" strokeWidth="1.500" />
        <rect x="12" y="12" width="12" height="12" fill="#fff" stroke="#58a8f5" />
        <rect x="14" y="14" width="8" height="8" fill="#6db9ff" />
        <path d="M11 11L4 4M4 9V4h5M25 11l7-7M27 4h5v5M11 25l-7 7M4 27v5h5M25 25l7 7M32 27v5h-5" fill="none" stroke="#3c8ad8" strokeWidth="1.300" />
      </g>
    ),
  },
  { name: '显示图素', art: <g>{planLines}<g transform="translate(25 17)"><Bulb /></g></g> },
  {
    name: '删除图素',
    art: (
      <g>
        <path d="M1-1h22l8 8v30H1z" fill="#fff" stroke="#555" />
        <path d="M23-1v8h8" fill="none" stroke="#555" />
        <g transform="translate(3 3) scale(.75)">{planLines}</g>
        <g transform="translate(19 17)"><Cross /></g>
      </g>
    ),
  },
  { name: '放大字体', art: <g>{bigA}<path d="M28 0v12M22 6h12" stroke="#2f86cc" strokeWidth="2.500" /></g> },
  { name: '缩小字体', art: <g>{bigA}<path d="M22 4h12" stroke="#2f86cc" strokeWidth="2.500" /></g> },
  { name: '导出DWG', art: <DwgMark /> },
  {
    name: '测量',
    art: (
      <g>
        <path d="M1 13h32" fill="none" stroke="#444" strokeDasharray="2 1" />
        <path d="M1 5v16" stroke="#444" strokeWidth="1.500" />
        <rect x="33" y="11" width="4" height="4" fill="#fff" stroke="#222" />
        <rect x="0" y="22" width="37" height="7" fill="#f0bb2c" stroke="#8b6a10" />
        <path d="M4 22v3M8 22v3M12 22v3M16 22v3M20 22v3M24 22v3M28 22v3M32 22v3" stroke="#6a4f08" />
      </g>
    ),
  },
  { name: '前一视图', art: <path d="M1 18L19 7v6h16v10H19v6z" fill="#fff" stroke="#444" strokeWidth="1.200" /> },
  { name: '后一视图', art: <path d="M35 18L17 7v6H1v10h16v6z" fill="#fff" stroke="#444" strokeWidth="1.200" /> },
  { name: '隐藏构件', art: <g>{ell}<g transform="translate(18 15)"><Cross /></g></g> },
  {
    name: '局部放大',
    art: (
      <g>
        <path d="M1 6h8v20h17v9H1z" fill="#a3cbed" stroke="#2f5f8f" />
        <path d="M1 6l3-3h8l-3 3zM9 6l3-3v17l-3 6zM9 26l4-4h16l-3 4zM26 26l3-4v9l-3 4z" fill="#6ba5d8" stroke="#2f5f8f" />
        <path d="M28 14l9 9" stroke="#444a52" strokeWidth="4" />
        <circle cx="22" cy="8" r="9" fill="#dfeeee" stroke="#70777f" strokeWidth="2" />
        <path d="M17 7q1-4 6-4" fill="none" stroke="#fff" strokeWidth="2" />
      </g>
    ),
  },
  {
    name: '梁查询',
    art: (
      <g stroke="#5d646c">
        <path d="M1 15L16 1h19L20 15z" fill="#fff" />
        <path d="M1 15h19v4h-6v8h6v8H1v-8h6v-8H1z" fill="#c9d0d8" />
        <path d="M20 15L35 1v15L20 33z" fill="#8a94a1" />
        <g transform="translate(12 11)" stroke="none"><Lens /></g>
      </g>
    ),
  },
  {
    name: '柱查询',
    art: (
      <g stroke="#5d646c">
        <path d="M10 6l6-5h12l-6 5z" fill="#fff" />
        <path d="M10 6h12v29H10z" fill="#c9d0d8" />
        <path d="M22 6l6-5v28l-6 6z" fill="#8a94a1" />
        <g transform="translate(11 11)" stroke="none"><Lens /></g>
      </g>
    ),
  },
  {
    name: '墙查询',
    art: (
      <g stroke="#5d646c">
        <path d="M1 5l4-4 30 8-4 4z" fill="#fff" />
        <path d="M1 5l30 8v21L1 26z" fill="#c9d0d8" />
        <path d="M31 13l4-4v21l-4 4z" fill="#8a94a1" />
        <g transform="translate(11 11)" stroke="none"><Lens /></g>
      </g>
    ),
  },
  {
    name: '板查询',
    art: (
      <g stroke="#5d646c">
        <path d="M14 6h22L25 25H1z" fill="#fff" />
        <path d="M1 25h24v6H1z" fill="#c9d0d8" />
        <path d="M36 6v6L25 31v-6z" fill="#8a94a1" />
        <g transform="translate(11 11)" stroke="none"><Lens /></g>
      </g>
    ),
  },
  { name: '显示构件', art: <g>{ell}<g transform="translate(25 17)"><Bulb /></g></g> },
  {
    name: '楼层显示',
    art: (
      <g stroke="#50565e">
        <path d="M1 32l6-8h28l-6 8z" fill="#fff" />
        <path d="M1 32h28v4H1zM29 32l6-8v4l-6 8z" fill="#c9d0d8" />
        <path d="M7 5l5-4h19l-5 4z" fill="#fff" />
        <path d="M7 5h19v24H7z" fill="#cfd6de" />
        <path d="M26 5l5-4v23l-5 5z" fill="#7b8795" />
        <path d="M7 11h19v6H7zM7 23h19v5H7z" fill="#5cb0fa" />
      </g>
    ),
  },
  {
    name: '属性编辑',
    art: (
      <g>
        <path d="M1 15l3-3h7V4l3-3h9v12h4v12l-3 6H1z" fill="#b7d0ee" />
        <path d="M1 15h11V4h8v13h5v14H1z" fill="#93b9e3" />
        <g transform="translate(16 18) scale(.85)"><Sheet /></g>
        <g transform="translate(24 8) scale(.6)"><Pencil /></g>
      </g>
    ),
  },
  {
    name: '构件列表',
    art: (
      <g>
        <path d="M1 9l8-8h26l-8 8z" fill="#8cccff" stroke="#2b6cb0" />
        <path d="M1 9h26v12H1z" fill="#5cb0fa" />
        <path d="M27 9l8-8v22l-8 6z" fill="#2f7fc6" />
        <path d="M1 21h26v14H1z" fill="#d0d7df" stroke="#8a94a1" />
        <g transform="translate(17 18)"><Sheet /></g>
      </g>
    ),
  },
  {
    name: '楼层列表',
    art: (
      <g>
        <path d="M1 5l22-4v10H1z" fill="#5cb0fa" /><path d="M23 1l13 4v6H23z" fill="#2f7fc6" />
        <path d="M1 12h22v6H1z" fill="#d0d7df" /><path d="M23 12h13v5H23z" fill="#7b8795" />
        <path d="M1 19l22 2v6L1 25z" fill="#5cb0fa" /><path d="M1 27l22 3v6L1 33z" fill="#d0d7df" stroke="#8a94a1" />
        <g transform="translate(19 19)"><Sheet /></g>
      </g>
    ),
  },
  {
    name: '整楼显示',
    art: (
      <g>
        <path d="M0 3l20-2 17 2-14 4z" fill="#222" />
        {[4, 12, 20, 28].map((y) => (
          <g key={y}>
            <path d={`M0 ${y}l22 3v5L0 ${y + 4}z`} fill="#777" />
            <path d={`M22 ${y + 3}l15-3v4l-15 4z`} fill="#aaa" />
          </g>
        ))}
      </g>
    ),
  },
  {
    name: '节点',
    art: (
      <g>
        <rect x="6" y="1" width="24" height="34" fill="#8fb4d8" stroke="#2b5f94" />
        <path d="M12 4h12v5h4v18h-4v5H12v-5H8V9h4z" fill="#fff" />
        <path d="M8 4h5v5H8zM23 4h5v5h-5zM8 27h5v5H8zM23 27h5v5h-5z" fill="#2f6fb0" />
      </g>
    ),
  },
  {
    name: '设置',
    art: (
      <g>
        <rect x="3" y="1" width="29" height="34" fill="#fff" stroke="#50565e" strokeWidth="2" />
        <path d="M7 7h21M7 12h21M7 30h21" stroke="#777" strokeWidth="2.500" />
        <path d="M7 18h17" stroke="#3f9a48" strokeWidth="3" />
        <path d="M12 24h17" stroke="#d34a40" strokeWidth="3" />
      </g>
    ),
  },
];

function ViewToolbar() {
  return (
    <div className="w-[682px] shrink-0 mr-px grid grid-cols-16 content-center gap-y-[7px] bg-[#ececec] border border-[#858585]">
      {viewTools.map((t) => (
        <button key={t.name} title={t.name} aria-label={t.name} className="h-9 flex items-center justify-center">
          <Svg box={36} className="w-9 h-9 overflow-visible">{t.art}</Svg>
        </button>
      ))}
    </div>
  );
}

/* ---------- status bar ---------- */

const toggles: [string, boolean, string][] = [
  ['点网显示', false, 'w-[92px]'],
  ['角度捕捉', false, 'w-[92px]'],
  ['正交模式', false, 'w-[92px]'],
  ['点网捕捉', false, 'w-[92px]'],
  ['对象捕捉', true, 'w-[92px]'],
  ['显示叉丝', false, 'w-20'],
  ['显示坐标', true, 'w-[74px]'],
];

function StatusBar() {
  return (
    <footer className="h-7 shrink-0 bg-[#525252] flex items-start text-white pr-[7px]">
      <span className={`pl-[241px] w-[887px] text-[13px] leading-[27px] ${mono}`}>21453.32,15662.91,0.00</span>
      <span className={`text-[15px] leading-[27px] ${mono}`}>
        <Mixed text="3D重生成完毕" latin="text-[13px]" />
      </span>
      <div className="ml-auto flex gap-2">
        {toggles.map(([label, on, width]) => (
          <button
            key={label}
            aria-pressed={on}
            className={`${width} h-[26px] text-[15px] leading-6 bg-linear-to-b ${
              on ? 'from-[#3a62ae] to-[#5c88dc]' : 'from-[#6c6c6c] to-[#8a8a8a]'
            }`}
          >
            {label}
          </button>
        ))}
      </div>
    </footer>
  );
}

export default function App() {
  return (
    <div className="h-screen flex flex-col bg-[#f8f8f8] text-black overflow-hidden font-['Open_Sans','Noto_Sans_CJK_SC',sans-serif]">
      <div className="relative">
        <TitleBar />
        <MenuTabs />
        <AppLogo />
      </div>
      <Ribbon />
      <main className="flex-1 min-h-0 flex">
        <Viewport />
        <WorkPanel />
      </main>
      <div className="h-[102px] shrink-0 flex pt-1 pb-1.5 gap-px">
        <CommandLine />
        <ViewToolbar />
      </div>
      <StatusBar />
    </div>
  );
}
